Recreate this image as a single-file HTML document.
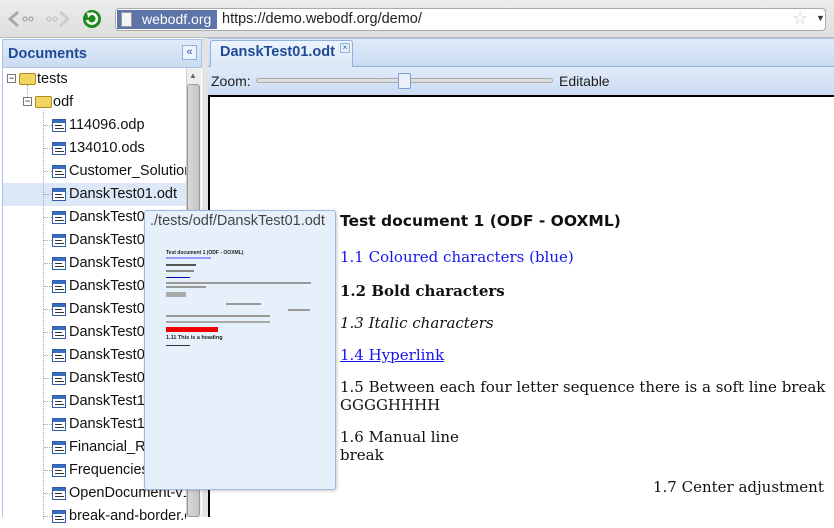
<!DOCTYPE html><html><head><meta charset="utf-8"><style>
*{margin:0;padding:0;box-sizing:border-box}
body{width:834px;height:517px;overflow:hidden;position:relative;background:#fff;font-family:"Liberation Sans",sans-serif}
.a{position:absolute}
.top{left:0;top:0;width:834px;height:38px;background:linear-gradient(#ececec,#dedede);border-bottom:1px solid #bbb}
.url{left:115px;top:8px;width:711px;height:23px;background:#fff;border:1px solid #aaa;border-radius:4px}
.site{left:117px;top:10px;width:100px;height:19px;background:#5c74a8;color:#fff;font-size:14px;line-height:19px;padding-left:25px}
.urltxt{left:222px;top:9px;font-size:14.5px;line-height:21px;color:#222}
.hdr{background:linear-gradient(#e0eaf8,#cbdcf2);border-bottom:1px solid #8fb1e0}
.row{position:absolute;left:0;width:186px;height:23px;font-size:14.5px;line-height:23px;color:#111;white-space:nowrap}
.ic{position:absolute;width:14px;height:13px;border:1px solid #2f5ea8;background:#fff}
.ic:before{content:"";position:absolute;left:0;top:0;right:0;height:3px;background:#3a6cc0}
.ic i{position:absolute;left:2px;height:1px;background:#333}
.fold{position:absolute;width:17px;height:12px;background:#f2d561;border:1px solid #b08a1c;border-radius:2px}
.pm{position:absolute;width:9px;height:9px;border:1px solid #777;background:#fff;font-size:9px;line-height:7px;text-align:center}
.doc{font-family:"DejaVu Serif",serif;font-size:15px;color:#111;position:absolute;white-space:nowrap}
</style></head><body>
<div class="a top"></div>
<svg class="a" style="left:6px;top:8px" width="34" height="22"><path d="M12 4 L4 11 L12 18" fill="none" stroke="#aaa" stroke-width="3"/><circle cx="19" cy="11" r="2" fill="none" stroke="#999"/><circle cx="25" cy="11" r="2" fill="none" stroke="#999"/></svg>
<svg class="a" style="left:44px;top:8px" width="28" height="22"><circle cx="5" cy="11" r="2" fill="none" stroke="#bbb"/><circle cx="11" cy="11" r="2" fill="none" stroke="#bbb"/><path d="M16 4 L24 11 L16 18" fill="none" stroke="#ccc" stroke-width="3"/></svg>
<svg class="a" style="left:81px;top:8px" width="22" height="22"><circle cx="11" cy="11" r="9" fill="#1e8a1e"/><path d="M6 12 A5 5 0 1 0 9 6" fill="none" stroke="#fff" stroke-width="2.5"/><path d="M6 4 L11 6 L7 10Z" fill="#fff"/></svg>
<div class="a url"></div>
<div class="a site">webodf.org</div>
<div class="a" style="left:121px;top:12px;width:11px;height:15px;background:#f4f4f4;border:1px solid #999"></div>
<div class="a urltxt">https://demo.webodf.org/demo/</div>
<div class="a" style="left:792px;top:8px;font-size:18px;color:#ccc">☆</div>
<div class="a" style="left:816px;top:13px;font-size:9px;color:#333">▼</div>

<div class="a hdr" style="left:2px;top:39px;width:200px;height:29px;border:1px solid #a8c4ea"></div>
<div class="a" style="left:8px;top:46px;font-size:14.5px;font-weight:bold;color:#1f4b96">Documents</div>
<div class="a" style="left:182px;top:45px;width:15px;height:15px;border:1px solid #8fb1e0;background:#eef4fc;font-size:11px;line-height:12px;text-align:center;color:#2b5aa8">«</div>
<div class="a" style="left:2px;top:68px;width:200px;height:449px;background:#fff;border-left:1px solid #a8c4ea"></div>
<div class="a" style="left:3px;top:183px;width:183px;height:23px;background:#dce8f7"></div>
<div class="a" style="left:186px;top:68px;width:15px;height:449px;background:#eee;border-left:1px solid #ccc"></div>
<div class="a" style="left:187px;top:84px;width:13px;height:433px;background:linear-gradient(90deg,#d8d8d8,#c4c4c4);border:1px solid #999;border-radius:3px"></div>
<div class="a" style="left:189px;top:71px;font-size:8px;color:#666">▲</div>
<div class="a" style="left:202px;top:38px;width:6px;height:479px;background:#e4e4e4"></div>

<div class="a" style="left:27px;top:85px;border-left:1px dotted #aaa;height:18px"></div>
<div class="a" style="left:43px;top:110px;border-left:1px dotted #aaa;height:409px"></div>
<div class="pm" style="left:7px;top:74px">−</div><div class="fold" style="left:19px;top:73px"></div>
<div class="row" style="left:37px;top:68px">tests</div>
<div class="pm" style="left:23px;top:97px">−</div><div class="fold" style="left:35px;top:96px"></div>
<div class="row" style="left:53px;top:91px">odf</div>

<div id="t"></div>
<script>
var n=["114096.odp","134010.ods","Customer_Solutions","DanskTest01.odt","DanskTest02.odt","DanskTest03.odt","DanskTest04.odt","DanskTest05.odt","DanskTest06.odt","DanskTest07.odt","DanskTest08.odt","DanskTest09.odt","DanskTest10.odt","DanskTest11.odt","Financial_Report","Frequencies.ods","OpenDocument-v1.2","break-and-border.odt"];
var h="";n.forEach(function(s,i){var y=114+i*23;h+='<div class="a" style="left:44px;top:'+(y+11)+'px;width:8px;border-top:1px dotted #aaa"></div><div class="ic" style="left:52px;top:'+(y+5)+'px"><i style="top:5px;width:7px"></i><i style="top:8px;width:9px"></i></div><div class="row" style="left:69px;top:'+y+'px;width:117px;overflow:hidden">'+s+'</div>'});
document.getElementById("t").innerHTML=h;
</script>

<div class="a hdr" style="left:208px;top:38px;width:626px;height:29px;border-top:1px solid #a8c4ea"></div>
<div class="a" style="left:210px;top:40px;width:143px;height:27px;background:linear-gradient(#eef4fc,#dbe7f7);border:1px solid #8fb1e0;border-bottom:none;border-radius:3px 3px 0 0"></div>
<div class="a" style="left:220px;top:44px;font-size:14.5px;font-weight:bold;color:#1f4b96">DanskTest01.odt</div>
<div class="a" style="left:340px;top:43px;width:10px;height:10px;border:1px solid #8fb1e0;background:#e4eefa;font-size:8px;line-height:8px;text-align:center;color:#2b5aa8">×</div>
<div class="a hdr" style="left:208px;top:67px;width:626px;height:29px"></div>
<div class="a" style="left:211px;top:73px;font-size:14px;color:#222">Zoom:</div>
<div class="a" style="left:256px;top:78px;width:297px;height:5px;background:#ddd;border:1px solid #aaa;border-radius:3px"></div>
<div class="a" style="left:398px;top:73px;width:13px;height:16px;background:#eaf1fb;border:1px solid #7da0d0;border-radius:2px"></div>
<div class="a" style="left:559px;top:73px;font-size:14px;color:#222">Editable</div>
<div class="a" style="left:208px;top:95px;width:626px;height:422px;border:2px solid #000;border-right:none;border-bottom:none;background:#fff"></div>

<div class="a" style="left:340px;top:212px;font-family:'DejaVu Sans',sans-serif;font-size:15.5px;font-weight:bold;color:#111">Test document 1 (ODF - OOXML)</div>
<div class="doc" style="left:340px;top:248px;color:#1515f0">1.1 Coloured characters (blue)</div>
<div class="doc" style="left:340px;top:282px;font-weight:bold">1.2 Bold characters</div>
<div class="doc" style="left:340px;top:314px;font-style:italic">1.3 Italic characters</div>
<div class="doc" style="left:340px;top:346px;color:#1515f0;text-decoration:underline">1.4 Hyperlink</div>
<div class="doc" style="left:340px;top:378px;line-height:18px">1.5 Between each four letter sequence there is a soft line break<br>GGGGHHHH</div>
<div class="doc" style="left:340px;top:428px;line-height:18px">1.6 Manual line<br>break</div>
<div class="doc" style="left:653px;top:478px">1.7 Center adjustment</div>

<div class="a" style="left:144px;top:210px;width:192px;height:280px;background:#e6f0fb;border:1px solid #9cb9e0;border-radius:3px;box-shadow:1px 1px 3px rgba(0,0,0,.2)"></div>
<div class="a" style="left:150px;top:213px;font-size:14.5px;color:#444">./tests/odf/DanskTest01.odt</div>
<div class="a" style="left:166px;top:250px;font-size:5px;font-weight:bold;color:#222">Test document 1 (ODF - OOXML)</div>
<div class="a" style="left:166px;top:257px;width:45px;height:2px;background:#99f"></div>
<div class="a" style="left:166px;top:264px;width:30px;height:2px;background:#555"></div>
<div class="a" style="left:166px;top:270px;width:28px;height:2px;background:#888"></div>
<div class="a" style="left:166px;top:277px;width:24px;height:1px;background:#00a"></div>
<div class="a" style="left:166px;top:282px;width:145px;height:2px;background:#999"></div>
<div class="a" style="left:166px;top:286px;width:40px;height:2px;background:#999"></div>
<div class="a" style="left:166px;top:292px;width:20px;height:5px;background:#aaa"></div>
<div class="a" style="left:226px;top:303px;width:35px;height:2px;background:#999"></div>
<div class="a" style="left:288px;top:309px;width:22px;height:2px;background:#999"></div>
<div class="a" style="left:166px;top:315px;width:104px;height:2px;background:#999"></div>
<div class="a" style="left:166px;top:321px;width:104px;height:2px;background:#aaa"></div>
<div class="a" style="left:166px;top:327px;width:52px;height:5px;background:#e00"></div>
<div class="a" style="left:166px;top:335px;font-size:5.5px;font-weight:bold;color:#222">1.11 This is a heading</div>
<div class="a" style="left:166px;top:345px;width:24px;height:1px;background:#333"></div>
</body></html>
